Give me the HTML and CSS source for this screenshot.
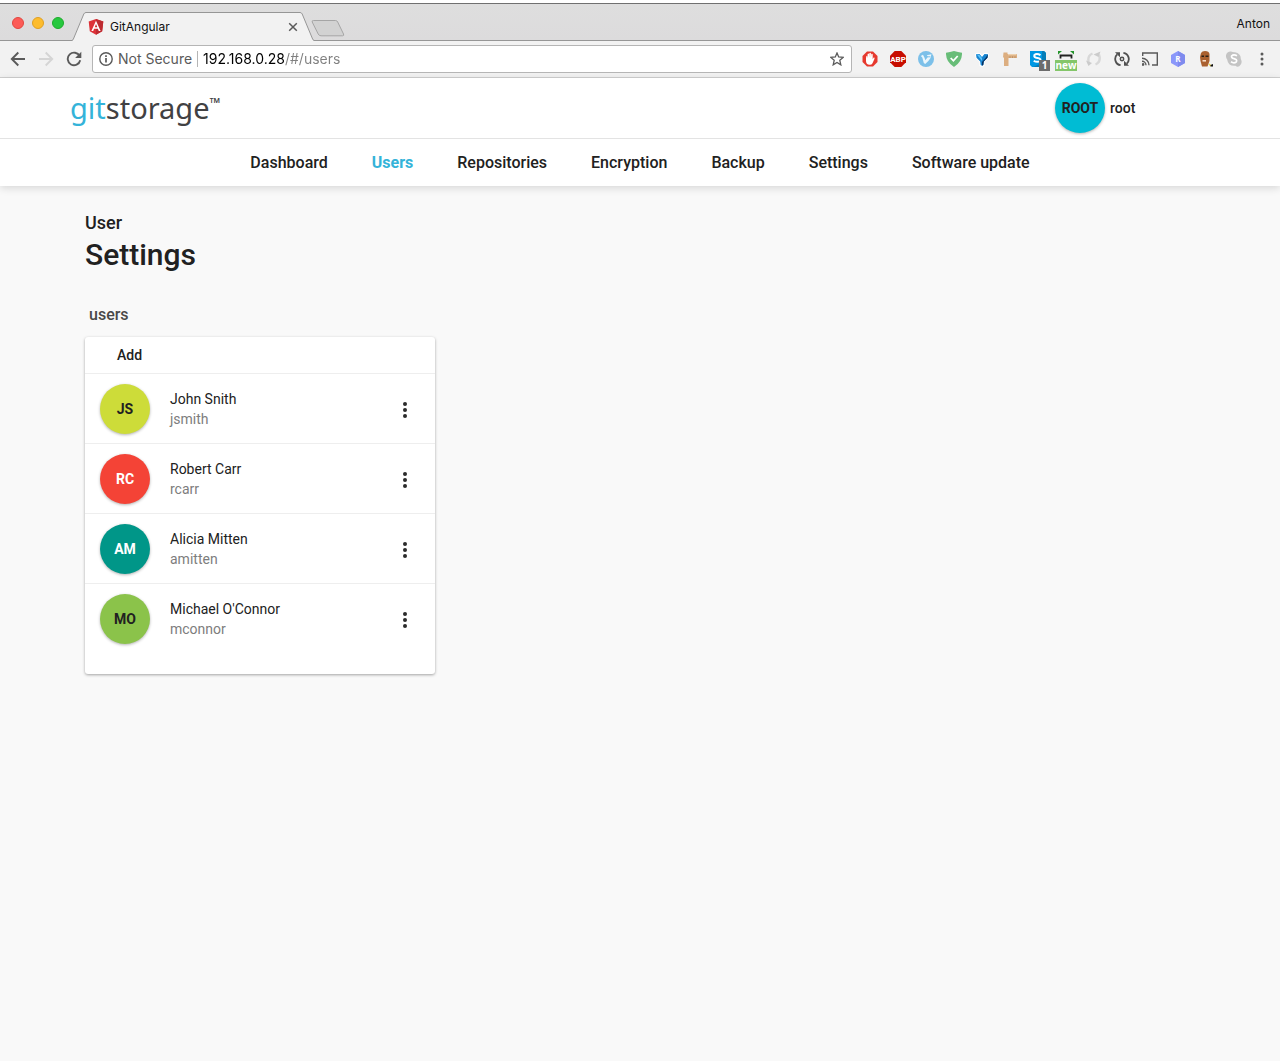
FILE: index.html
```
<!DOCTYPE html>
<html lang="en">
<head>
    <meta charset="UTF-8">
    <meta name="viewport" content="width=device-width, initial-scale=1.0">
    <title>GitAngular</title>
    <link rel="stylesheet" href="styles.css">
</head>
<body>

    <div class="browser">
        <!-- Tabs -->
        <div class="tab-strip">
            <div class="lights">
                <button class="light red" aria-label="Close"></button>
                <button class="light yellow" aria-label="Minimize"></button>
                <button class="light green" aria-label="Zoom"></button>
            </div>
            <div class="tab">
                <svg class="tab-edge" width="14" height="29" viewBox="0 0 14 29"><path d="M0 29 L1 27.5 L12 1.5 Q12.3 .5 14 .5 V29Z" fill="#f2f2f2"/><path d="M0 28.5 Q1 28 1.4 27 L11.8 2 Q12.5 .5 14 .5" fill="none" stroke="#969696"/></svg>
                <div class="tab-body">
                    <svg width="16" height="16" viewBox="0 0 16 16"><path d="M8 0 L15.3 2.6 14.2 12.3 8 15.8 1.8 12.3 .7 2.6Z" fill="#dd3238"/><path d="M8 0 L15.3 2.6 14.2 12.3 8 15.8Z" fill="#bd2b31"/><path d="M8 1.8 L3.4 12 H5.2 L6.1 9.8 H9.9 L10.8 12 H12.6Z M8 5.1 L9.3 8.3 H6.7Z" fill="#fff" fill-rule="evenodd"/></svg>
                    <span class="tab-title">GitAngular</span>
                    <button class="tab-close" aria-label="Close tab"><svg width="10" height="10" viewBox="0 0 10 10"><path d="M1.2 1.2 L8.8 8.8 M8.8 1.2 L1.2 8.8" stroke="#5a5a5a" stroke-width="1.5"/></svg></button>
                </div>
                <svg class="tab-edge" width="14" height="29" viewBox="0 0 14 29"><path d="M14 29 L13 27.5 L2 1.5 Q1.7 .5 0 .5 V29Z" fill="#f2f2f2"/><path d="M14 28.5 Q13 28 12.6 27 L2.2 2 Q1.5 .5 0 .5" fill="none" stroke="#969696"/></svg>
            </div>
            <button class="new-tab" aria-label="New tab"><svg width="34" height="17" viewBox="0 0 34 17"><path d="M2.5 .5 H24.5 Q26 .5 26.7 2 L32.5 14 Q33.3 15.8 31.5 15.8 H10 Q8 15.8 7.2 14 L1.2 2 Q.6 .5 2.5 .5Z" fill="#d2d2d2" stroke="#a5a5a5"/></svg></button>
            <button class="profile">Anton</button>
        </div>

        <!-- Toolbar -->
        <div class="toolbar">
            <div class="nav-buttons">
                <button aria-label="Back"><svg width="16" height="16" viewBox="0 0 16 16" fill="none" stroke="#5a5a5a" stroke-width="1.9"><path d="M15 8 H2 M8.3 1.5 L1.8 8 L8.3 14.5"/></svg></button>
                <button aria-label="Forward"><svg width="16" height="16" viewBox="0 0 16 16" fill="none" stroke="#d5d5d5" stroke-width="1.9"><path d="M1 8 H14 M7.7 1.5 L14.2 8 L7.7 14.5"/></svg></button>
                <button aria-label="Reload"><svg width="16" height="16" viewBox="0 0 16 16"><path d="M13.7 5.2 A6.3 6.3 0 1 0 14.2 9.3" fill="none" stroke="#5a5a5a" stroke-width="1.9"/><path d="M15.3 .8 V7 H9.1Z" fill="#5a5a5a"/></svg></button>
            </div>
            <div class="address">
                <svg width="14" height="14" viewBox="0 0 14 14"><circle cx="7" cy="7" r="6.2" fill="none" stroke="#5a5a5a" stroke-width="1.4"/><path d="M7 6 V10.6 M7 3.2 V4.9" stroke="#5a5a5a" stroke-width="1.7"/></svg>
                <label class="secure" for="url">Not Secure</label>
                <input class="url" id="url" type="text" value="192.168.0.28/#/users">
                <button class="star" aria-label="Bookmark"><svg width="14" height="14" viewBox="0 0 14 14"><path d="M7 1 L8.7 5 L13.2 5.4 L9.8 8.3 L10.8 12.8 L7 10.4 L3.2 12.8 L4.2 8.3 L.8 5.4 L5.3 5Z" fill="none" stroke="#5a5a5a" stroke-width="1.3"/></svg></button>
            </div>
            <div class="extensions">
                <button aria-label="Opera blocker"><svg width="16" height="16" viewBox="0 0 16 16"><path d="M5 .5 H11 L15.5 5 V11 L11 15.5 H5 L.5 11 V5Z" fill="#e6392e"/><path d="M4 7 Q4.2 4.5 5.2 4.8 L5.6 7 V3 Q6.5 2 7 3 V6.5 L7.3 2.2 Q8.3 1.2 8.9 2.3 V6.8 L9.3 3 Q10.3 2.3 10.7 3.3 V8.3 L11.6 6.6 Q12.9 6.2 12.5 7.8 L10.5 12.2 Q9.6 14 7.5 13.8 Q4 13.4 4 10Z" fill="#fff"/></svg></button>
                <button aria-label="ABP"><svg width="16" height="16" viewBox="0 0 16 16"><path d="M4.7 0 H11.3 L16 4.7 V11.3 L11.3 16 H4.7 L0 11.3 V4.7Z" fill="#c70d00"/><text class="abp" x="8" y="10.8">ABP</text></svg></button>
                <button aria-label="Vine"><svg width="16" height="16" viewBox="0 0 16 16"><circle cx="8" cy="8" r="8" fill="#7cc0e9"/><path d="M2.8 5 L5 3.8 Q6.8 7 7.3 9.2 L10 5.7 L8.8 4.3 L13.4 3.2 L12.5 7 Q10.5 10.5 7.2 13 L5.8 12 L4.3 6.5Z" fill="#eaf6fc"/><path d="M8.7 5.8 H12.3" stroke="#7cc0e9"/></svg></button>
                <button aria-label="Guard"><svg width="16" height="16" viewBox="0 0 16 16"><path d="M8 0 Q12 1.4 16 1.7 Q16.4 11 8 16 Q-.4 11 0 1.7 Q4 1.4 8 0Z" fill="#68bd78"/><path d="M4.7 7 L7.4 9.8 L11.7 5" fill="none" stroke="#fff" stroke-width="1.8"/></svg></button>
                <button aria-label="Mask"><svg width="16" height="16" viewBox="0 0 16 16"><path d="M1 3 Q3 1 6 2 L8 4 10 2 Q13 1 15 3 L14.5 7 10.5 11 V15 L8 16 5.5 15 V11 L1.5 7Z" fill="#fff"/><path d="M2 3.2 L5.5 3 8 6 10.5 3 14 3.2 13.5 6.8 9.8 10.5 9.3 14 8 14.8 6.7 14 6.2 10.5 2.5 6.8Z" fill="#1684d0"/><path d="M14 3.2 L13.5 6.8 9.8 10.5 9.3 14 8 14.8 V11 L11.5 7Z" fill="#08305f"/><path d="M3 3.8 L5.3 3.8 8 7 V10Z" fill="#5cc3fa"/></svg></button>
                <button aria-label="Ruler"><svg width="16" height="16" viewBox="0 0 16 16"><path d="M1.5 1.5 H5.5 V3 H15 V7 H6.5 V15 H2 V6.5 H1Z" fill="#dcae80"/><path d="M6 3.7 H14.5" stroke="#f0d8b8"/><path d="M8 5.3 V7 M10.5 5.3 V7 M13 5.3 V7" stroke="#a98460" stroke-width=".7"/></svg></button>
                <button class="badged" aria-label="Skype"><svg width="20" height="20" viewBox="0 0 20 20"><path d="M0 0 H14 L16 2 V14 L14 16 H2 L0 14Z" fill="#0098e3"/><path d="M12 0 H14 L16 2 V14 L14 16 H3 L12 12Z" fill="#067db7"/><path d="M10.5 4.2 Q6.7 1.8 4.4 4 Q3.5 6.5 7.4 7.1 Q11.7 7.8 10 10 Q7.5 11.7 3.7 9.8" fill="none" stroke="#fff" stroke-width="2"/><path d="M9 9 H20 V20 H9Z" fill="#6c6c6c"/><text class="badge-text" x="14.5" y="18">1</text></svg></button>
                <button class="badged centered" aria-label="New"><svg width="22" height="20" viewBox="0 0 22 20"><path d="M3 0 H7 L3 3.5Z M15 0 H19 V3.5Z" fill="#25952c"/><path d="M5.5 7.5 V4.5 H16.5 V7.5" fill="none" stroke="#222" stroke-width="1.8"/><path d="M0 9 H22 V20 H0Z" fill="#84c66a"/><text class="badge-text" x="11" y="17.5">new</text></svg></button>
                <button aria-label="Refresh"><svg width="16" height="16" viewBox="0 0 16 16"><path d="M6.5 2.5 Q.6 5 3 12.5 M9.5 13.5 Q15.4 11 13 3.5" fill="none" stroke="#d8d8d8" stroke-width="2.4"/><path d="M0 9.5 L6 12 2.5 15Z M7.5 3.5 L14.5 .5 12.5 6Z" fill="#cbcbcb"/></svg></button>
                <button aria-label="Sync"><svg width="16" height="16" viewBox="0 0 16 16"><path d="M3.2 3.4 A6.3 6.3 0 0 0 6.6 14.2 M9.4 1.8 A6.3 6.3 0 0 1 12.8 12.6" fill="none" stroke="#505050" stroke-width="1.8"/><path d="M1 1.2 H6 V6.2Z M15 14.8 H10 V9.8Z" fill="#505050"/><circle cx="8" cy="8" r="1.7" fill="none" stroke="#505050" stroke-width="1.5"/></svg></button>
                <button aria-label="Cast"><svg width="16" height="16" viewBox="0 0 16 16" fill="none" stroke="#5a5a5a" stroke-width="1.4"><path d="M.7 5 V2 H15.3 V14 H10 M0 7.2 A7 7 0 0 1 7 14.2 M0 10.2 A4 4 0 0 1 4 14.2"/><circle cx="1" cy="13.5" r=".7"/></svg></button>
                <button aria-label="R"><svg width="16" height="16" viewBox="0 0 16 16"><path d="M8 0 L15 4 V12 L8 16 1 12 V4Z" fill="#8b97fa"/><path d="M8 0 L15 4 V12 L8 16Z" fill="#7f8bee"/><text class="badge-small" x="8" y="10.7">R</text></svg></button>
                <button aria-label="Face"><svg width="16" height="16" viewBox="0 0 16 16"><path d="M3 2 Q4 0 7 0 Q11 0 11.5 3 V10 L9.5 15.5 H4 L2.5 10 2 6Z" fill="#a9602f"/><path d="M3.5 4.5 H6 V6 H3.5Z M7.5 4.5 H10.5 V6 H7.5Z" fill="#292018"/><path d="M4.5 9.8 H8" stroke="#fbe3cf" stroke-width="1.5"/><path d="M11 13 L13 15" stroke="#ead34b" stroke-width="1.4"/><path d="M12.5 14 L15 13 V15.5 H12.5Z" fill="#111"/></svg></button>
                <button aria-label="Skype call"><svg width="16" height="16" viewBox="0 0 16 16"><path d="M5 .5 Q7 1.5 9 1.3 Q15 2.5 14.8 8 Q17 12 13.5 15 Q11.5 16.5 9.5 14.8 Q2 15.5 1.2 8.5 Q-1.2 5 1 2 Q2.5 0 5 .5Z" fill="#c4c4c4"/><path d="M11 4.8 Q7.5 3 5.6 5 Q5 7 8 7.6 Q11.5 8.5 10.4 10.8 Q8 12.8 5 10.8" fill="none" stroke="#fff" stroke-width="1.7"/></svg></button>
                <button aria-label="Menu"><svg width="16" height="16" viewBox="0 0 16 16" fill="#5a5a5a"><circle cx="8" cy="3" r="1.5"/><circle cx="8" cy="8" r="1.5"/><circle cx="8" cy="13" r="1.5"/></svg></button>
            </div>
        </div>
    </div>

    <header class="header">
        <div class="header-top">
            <div class="container header-row">
                <a class="logo" href="#"><span class="git">git</span>storage<sup>™</sup></a>
                <div class="account">
                    <span class="avatar cyan">ROOT</span>
                    <span>root</span>
                </div>
            </div>
        </div>
        <nav class="menu">
            <a href="#">Dashboard</a>
            <a class="active" href="#/users">Users</a>
            <a href="#">Repositories</a>
            <a href="#">Encryption</a>
            <a href="#">Backup</a>
            <a href="#">Settings</a>
            <a href="#">Software update</a>
        </nav>
    </header>

    <main class="container">
        <div class="page">
            <h1><small>User</small>Settings</h1>
            <h2>users</h2>

            <section class="card">
                <button class="add">Add</button>
                <ul class="users">
                    <li class="user">
                        <span class="avatar lime">JS</span>
                        <div class="user-text"><div>John Snith</div><div class="login">jsmith</div></div>
                        <button class="more" aria-label="Actions"><svg width="6" height="18" viewBox="0 0 6 18"><circle cx="3" cy="3" r="2"/><circle cx="3" cy="9" r="2"/><circle cx="3" cy="15" r="2"/></svg></button>
                    </li>
                    <li class="user">
                        <span class="avatar tomato">RC</span>
                        <div class="user-text"><div>Robert Carr</div><div class="login">rcarr</div></div>
                        <button class="more" aria-label="Actions"><svg width="6" height="18" viewBox="0 0 6 18"><circle cx="3" cy="3" r="2"/><circle cx="3" cy="9" r="2"/><circle cx="3" cy="15" r="2"/></svg></button>
                    </li>
                    <li class="user">
                        <span class="avatar teal">AM</span>
                        <div class="user-text"><div>Alicia Mitten</div><div class="login">amitten</div></div>
                        <button class="more" aria-label="Actions"><svg width="6" height="18" viewBox="0 0 6 18"><circle cx="3" cy="3" r="2"/><circle cx="3" cy="9" r="2"/><circle cx="3" cy="15" r="2"/></svg></button>
                    </li>
                    <li class="user">
                        <span class="avatar leaf">MO</span>
                        <div class="user-text"><div>Michael O'Connor</div><div class="login">mconnor</div></div>
                        <button class="more" aria-label="Actions"><svg width="6" height="18" viewBox="0 0 6 18"><circle cx="3" cy="3" r="2"/><circle cx="3" cy="9" r="2"/><circle cx="3" cy="15" r="2"/></svg></button>
                    </li>
                </ul>
            </section>
        </div>
    </main>

</body>
</html>
```
FILE: styles.css
```
* {
    box-sizing: border-box;
}

body {
    margin: 0;
    padding-top: 3px;
    min-height: 100vh;
    font-family: Roboto, sans-serif;
    font-size: 14px;
    line-height: 20px;
    color: #212121;
    background: linear-gradient(#fff 3px, #f9f9f9 3px);
}

button {
    margin: 0;
    padding: 0;
    border: none;
    background: none;
    font: inherit;
    color: inherit;
    cursor: pointer;
}

svg {
    display: block;
}

a {
    color: inherit;
    text-decoration: none;
}

/* Browser window */
.browser {
    font-family: Inter, sans-serif;
    border-top: 1px solid #707070;
    border-bottom: 1px solid #d0d0d0;
    background: #f2f2f2;
}

.tab-strip {
    display: flex;
    align-items: flex-end;
    height: 37px;
    padding-left: 12px;
    background: linear-gradient(#dedede, #dcdbdc 36px, #969696 36px);
    font-size: 12px;
    color: #111;
}

.lights {
    display: flex;
    gap: 8px;
    width: 60px;
    padding-bottom: 12px;
}

.light {
    width: 12px;
    height: 12px;
    border-radius: 50%;
}

.red {
    background: #fc5b57;
    border: 1px solid #e2463f;
}

.yellow {
    background: #fdbc2e;
    border: 1px solid #dfa023;
}

.green {
    background: #27c83f;
    border: 1px solid #1dac2b;
}

.tab {
    display: flex;
    width: 242px;
}

.tab-body {
    flex: 1;
    display: flex;
    align-items: center;
    height: 29px;
    padding: 0 2px;
    border-top: 1px solid #969696;
    background: #f2f2f2;
}

.tab-title {
    flex: 1;
    margin-left: 6px;
}

.new-tab {
    margin: 0 0 4px -3px;
}

.profile {
    margin-left: auto;
    padding: 0 10px 7px 0;
}

.toolbar {
    display: flex;
    align-items: center;
    height: 36px;
    padding: 0 10px;
}

.nav-buttons {
    display: flex;
    gap: 12px;
    margin-right: 10px;
}

.address {
    flex: 1;
    display: flex;
    align-items: center;
    height: 28px;
    padding: 0 7px 0 6px;
    border: 1px solid #b5b5b5;
    border-radius: 3px;
    background: #fff;
    font-size: 14px;
}

.secure {
    margin-left: 5px;
    padding-right: 5px;
    line-height: 16px;
    border-right: 1px solid #b5b5b5;
    color: #5a5a5a;
}

.url {
    flex: 1;
    min-width: 0;
    padding: 0 0 0 5px;
    border: none;
    outline: none;
    font: inherit;
    color: transparent;
    background: linear-gradient(90deg, #000 87px, #808080 87px);
    -webkit-background-clip: text;
    background-clip: text;
}

.extensions {
    display: flex;
    align-items: center;
    gap: 12px;
    margin-left: 10px;
}

.extensions button {
    display: flex;
    justify-content: center;
    width: 16px;
    height: 16px;
}

.extensions svg {
    flex: none;
}

/* the badge hangs out of the 16px icon box */
.extensions .badged {
    justify-content: flex-start;
}

.extensions .centered {
    justify-content: center;
}

.abp {
    font: bold 8px Roboto, sans-serif;
    text-anchor: middle;
    fill: #fff;
}

.badge-text {
    font: bold 10px "Open Sans", sans-serif;
    text-anchor: middle;
    fill: #fff;
}

.badge-small {
    font: bold 8px "Open Sans", sans-serif;
    text-anchor: middle;
    fill: #fff;
}

/* Site header */
.container {
    width: 100%;
    max-width: 1170px;
    margin: 0 auto;
    padding: 0 15px;
}

.header {
    background: #fff;
    box-shadow: 0 2px 8px rgba(0, 0, 0, 0.14);
}

.header-top {
    border-bottom: 1px solid #e3e3e3;
}

.header-row {
    display: flex;
    align-items: center;
    justify-content: space-between;
    height: 60px;
}

.logo {
    font-family: "Noto Sans", sans-serif;
    font-size: 29px;
    line-height: 40px;
    color: #414143;
}

.logo .git {
    color: #34b3d9;
}

.logo sup {
    font-size: 14px;
    line-height: 14px;
}

.account {
    display: flex;
    align-items: center;
    gap: 5px;
    width: 100px;
    margin-right: 55px;
    font-weight: 500;
}

.menu {
    display: flex;
    justify-content: center;
    gap: 44px;
    font-size: 16px;
    font-weight: 500;
    line-height: 47px;
}

.menu .active {
    font-weight: 700;
    color: #34b3d9;
}

.avatar {
    flex: none;
    width: 50px;
    height: 50px;
    border-radius: 50%;
    box-shadow: 0 1px 3px rgba(0, 0, 0, 0.3);
    font-weight: 700;
    line-height: 50px;
    text-align: center;
}

.cyan {
    background: #00bcd4;
}

.lime {
    background: #cddc39;
}

.tomato {
    background: #f44336;
    color: #fff;
}

.teal {
    background: #009688;
    color: #fff;
}

.leaf {
    background: #8bc34a;
}

/* Users page */
.page {
    padding: 26px 15px;
}

h1 {
    margin: 0;
    font-size: 30px;
    font-weight: 500;
    line-height: 41px;
}

h1 small {
    display: block;
    font-size: 18px;
    line-height: 22px;
}

h2 {
    margin: 30px 4px 12px;
    font-size: 16px;
    font-weight: 500;
    line-height: 20px;
    color: #484848;
}

.card {
    max-width: 350px;
    padding-bottom: 21px;
    border-radius: 3px;
    background: #fff;
    box-shadow: 0 1px 3px rgba(0, 0, 0, 0.35);
}

.add {
    display: block;
    width: 100%;
    height: 36px;
    padding: 0 32px;
    font-weight: 500;
    text-align: left;
}

.users {
    margin: 0;
    padding: 0;
    list-style: none;
}

.user {
    display: flex;
    align-items: center;
    height: 70px;
    padding: 0 15px;
    border-top: 1px solid #eee;
}

.user-text {
    flex: 1;
    margin-left: 20px;
}

.login {
    color: #7d7d7d;
}

.more {
    padding: 10px 12px 8px;
    fill: #2b2b2b;
}
```
